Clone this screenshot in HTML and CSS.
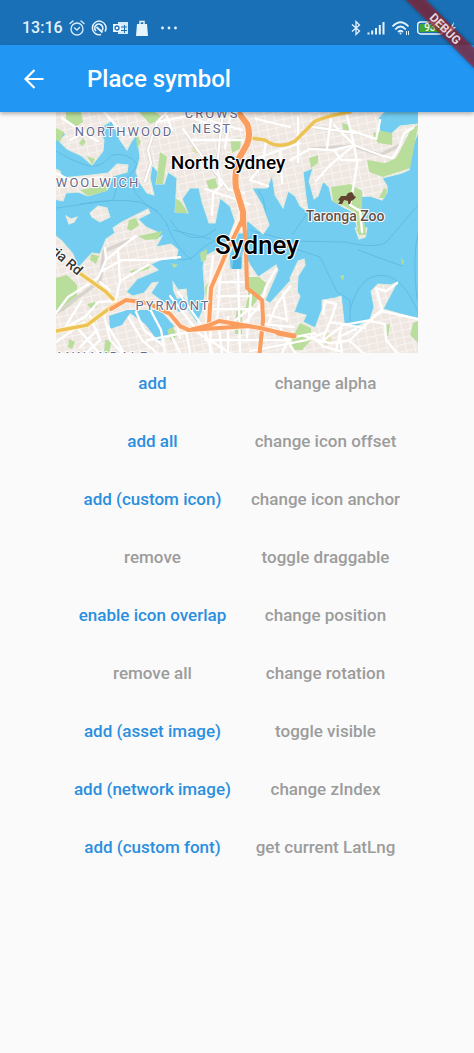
FILE: index.html
```html
<!DOCTYPE html>
<html lang="en">
<head>
    <meta charset="UTF-8">
    <meta name="viewport" content="width=device-width, initial-scale=1.0">
    <title>Place symbol</title>
    <link rel="stylesheet" href="styles.css">
</head>
<body>
    <div class="status-bar">
        <span class="time">13:16</span>
        <div class="status-left">
            <svg width="16" height="18" viewBox="0 0 16 18" fill="none" stroke="#d5eafa" stroke-width="1.4" stroke-linecap="round">
                <circle cx="8" cy="10" r="6"/>
                <path d="M1 4.5L4 2M15 4.5L12 2M5.500 9L8 11L10.500 8.500"/>
            </svg>
            <svg width="16" height="18" viewBox="0 0 16 18" fill="none" stroke="#e6f2fb" stroke-width="1.500">
                <path d="M10 15.500A6.800 6.800 0 1 1 14 12.500"/>
                <path d="M5 12A4 4 0 1 1 11 11.500M5.500 8L11.500 13.500" stroke-width="1.700"/>
            </svg>
            <svg width="16" height="18" viewBox="0 0 16 18">
                <path d="M5 3H15V15H5Z" fill="#d5eafa"/>
                <path d="M8 8H14M8 11.500H14M11.500 6V14" stroke="#1a70b6"/>
                <rect x="0" y="5" width="8" height="8" fill="#eef7fd"/>
                <circle cx="4" cy="9" r="2" fill="none" stroke="#1a70b6" stroke-width="1.300"/>
            </svg>
            <svg width="14" height="18" viewBox="0 0 14 18">
                <path d="M2 5H12L13 17H1Z" fill="#e6f4fd"/>
                <path d="M5 7V2.500H9V7" fill="none" stroke="#e6f4fd" stroke-width="1.500"/>
            </svg>
        </div>
        <svg class="dots" width="16" height="18" viewBox="0 0 16 18" fill="#e6f2fb">
            <circle cx="1.500" cy="9" r="1.400"/><circle cx="8" cy="9" r="1.400"/><circle cx="14.500" cy="9" r="1.400"/>
        </svg>
        <div class="status-right">
            <svg width="10" height="18" viewBox="0 0 10 18" fill="none" stroke="#e6f2fb" stroke-width="1.300">
                <path d="M1 5.500L8.500 12L5 15.500V2.500L8.500 6L1 12.500"/>
            </svg>
            <svg width="18" height="18" viewBox="0 0 18 18" stroke="#e6f2fb" stroke-width="2">
                <path d="M1.500 15.500V13.500M5.200 15.500V11.500M9 15.500V9M12.800 15.500V6M16.500 15.500V3"/>
            </svg>
            <svg width="20" height="18" viewBox="0 0 20 18" fill="none" stroke="#e6f2fb" stroke-width="1.800">
                <path d="M1.500 7.500Q9.500 -1 17.500 7.500M4.200 10.500Q9.500 4.500 14.800 10.500M7 13Q9.500 10.500 12 13"/>
                <circle cx="9.500" cy="14.500" r="1" fill="#e6f2fb" stroke="none"/>
                <path d="M15.500 12V16M17.500 12V16" stroke-width="1"/>
            </svg>
            <svg width="40" height="18" viewBox="0 0 40 18">
                <rect x="0.700" y="3" width="25" height="12" rx="3" fill="none" stroke="#f0f7fc" stroke-width="1.400"/>
                <rect x="2.500" y="5" width="21.500" height="8" rx="1" fill="#43a536"/>
                <path d="M27.500 7V11" stroke="#f0f7fc" stroke-width="2"/>
                <path d="M37 3L32 10H35L33 15L39 8H36Z" fill="#f0f7fc"/>
                <text x="13" y="12" class="battery-text">93</text>
            </svg>
        </div>
    </div>

    <header class="app-bar">
        <button class="back" aria-label="Back">
            <svg width="20" height="20" viewBox="0 0 20 20" fill="none" stroke="#fff" stroke-width="2.200">
                <path d="M10.500 1L1.500 10L10.500 19M1.500 10H19.500"/>
            </svg>
        </button>
        <h1>Place symbol</h1>
    </header>

    <svg class="debug-banner" width="74" height="74" viewBox="0 0 74 74">
        <g transform="translate(74 0) rotate(45)">
            <rect class="banner-shadow" x="-60" y="34" width="120" height="14"/>
            <rect x="-60" y="34" width="120" height="14" fill="#a51c28" fill-opacity="0.600"/>
            <text x="0" y="45" class="banner-text">DEBUG</text>
        </g>
    </svg>

    <main>
        <svg class="map" viewBox="56 112 362 241" role="img" aria-label="Map of Sydney">
            <defs>
                <!-- faint street grid over the land -->
                <pattern id="streets" width="9" height="7" patternUnits="userSpaceOnUse" patternTransform="rotate(-12)">
                    <rect width="9" height="7" fill="#efe7e1"/>
                    <path d="M0 .5H9M.5 0V7" stroke="#f8f4f1" stroke-width="1.200"/>
                </pattern>
            </defs>
            <rect x="56" y="112" width="362" height="241" fill="#73cdf0"/>

            <!-- ferry lines -->
            <g fill="none" stroke="#5fb9e2" stroke-width="0.900">
                <path d="M56 151Q70 160 85 165T112 155Q128 152 137 164Q130 180 118 183L113 200L56 208"/>
                <path d="M80 204Q115 198 140 202Q165 212 170 232Q180 252 192 260"/>
                <path d="M130 182Q140 205 158 211M170 220Q190 250 216 229M173 230L211 239"/>
                <path d="M250 230L290 241L345 242Q380 250 388 240L418 205"/>
                <path d="M265 240Q300 250 320 257L337 292L350 300V322"/>
                <path d="M358 250L402 266"/>
                <path d="M350 310Q358 280 375 276Q400 270 418 312M418 232Q412 260 417 300"/>
                <path d="M258 190Q270 205 262 230L245 240M302 180L306 215L292 235"/>
                <path d="M173 258Q190 265 202 248L222 236"/>
            </g>

            <!-- land -->
            <g fill="url(#streets)" stroke="#e2ecdf" stroke-width="1">
                <path d="M50 108H102L111 121L98 129L104 140L103 151L92 165L82 156L67 149L59 141L66 134L50 126Z"/>
                <path d="M100 108H388L378 118L380 132L391 134L400 126L418 124V132L411 150L409 170L402 173L382 178L387 186V192L382 200L370 196L358 197L361 212L366 235H359L353 212L343 207L332 200L329 187L323 181L318 196L314 199L309 181L313 168L303 172L305 190L308 212L300 206L295 196L288 191L283 208L275 195L272 175L267 188H252L262 205L269 225L263 234L247 220L245 233H239L230 206L220 198L215 223H209L202 202L199 188H190L182 199L188 213L175 212L177 178L168 172L164 184H156L158 172L152 165L150 178L154 195L147 193L140 183L136 172L140 158L137 134L131 142L127 150L120 140L112 121Z"/>
                <path d="M50 166L60 171L62 178L92 175L108 173L117 164L128 165L127 172L113 176L107 190L88 196L78 192L66 193L63 201L50 198Z"/>
                <path d="M90 213L98 206L107 208L110 217L100 222L92 217Z"/>
                <path d="M66 216L71 219L77 217L74 222L69 224Z"/>
                <path d="M50 231L62 241L73 254L78 268L92 253L100 254L106 239L115 233L113 228L122 222L148 209L150 213L138 219L146 227L157 232L149 236L155 240L162 236L156 247L171 244L178 250L176 259L167 257L151 264L158 270L137 279L126 292L133 296L144 293L152 283L158 282L151 293L166 304L174 304L173 282L178 290L186 289L188 304L181 300L197 323L202 312L205 293L203 267L205 256L217 250L229 254L230 269H242L243 252L250 265L258 277L276 265L278 270L265 300L270 303L282 290L290 281L300 296L294 312L306 315L303 322L315 328L322 309L322 300L335 298L341 296L344 323L356 327L370 319L374 307L371 291L378 284L391 285L397 282L383 309L418 319V360H50Z"/>
                <path d="M298 261L304 259L305 265L298 276L297 294H294L290 278Z"/>
                <path d="M355 228L367 228L365 237L359 239Z"/>
            </g>
            <path d="M109 316L127 310L160 310L174 326L169 336L158 341L145 324L130 313L122 325L110 329Z" fill="#73cdf0"/>
            <path d="M172 288L177 299L184 297L187 306L179 312L166 303Z" fill="#73cdf0"/>

            <!-- parks -->
            <g fill="#b9de9c">
                <path d="M66 112H81L83 122L75 127L66 122Z"/>
                <path d="M56 128L64 132L60 142L56 140ZM79 143L83 138L86 142L82 146ZM87 156L95 159L92 165Z"/>
                <path d="M139 112H155L164 118L150 124ZM160 152L167 157L163 184H156ZM136 133L141 142L137 149Z"/>
                <path d="M80 190L106 185L107 191L88 196ZM129 220L136 218L139 225L131 231L127 229Z"/>
                <path d="M230 139L241 138L240 149L232 153ZM206 181L215 178L218 188L209 189ZM175 198L181 202L188 213H175Z"/>
                <path d="M342 123L349 125V130H343ZM373 133L382 131L392 133V145L378 143L374 138Z"/>
                <path d="M367 160L385 163L396 158L404 143L411 129L418 125L410 168L383 177L369 172Z"/>
                <path d="M331 187L350 184L362 191V207L353 211L344 206L333 202Z"/>
                <path d="M354 210L362 208L366 235H359ZM309 158L318 155V163L311 168ZM384 188L387 190L385 198H379Z"/>
                <path d="M56 278L67 275L77 285L77 300L63 311L56 310ZM91 254L99 256L96 264L90 260ZM138 236L162 231L158 239L145 240Z"/>
                <path d="M248 277L259 277L266 283L262 293L252 307L244 313L248 297ZM237 309H242V334H235V320Z"/>
                <path d="M205 287L211 280L211 297L206 301ZM300 323L311 328V340L302 350H292V338Z"/>
                <path d="M413 323L418 321V343L410 335ZM385 325L390 324L388 336H385ZM105 340L112 340L109 353H104ZM167 330L173 327L177 336L171 341Z"/>
                <path d="M200 253L207 249L206 260L201 262ZM171 263L178 265L174 268ZM356 229L366 229L363 235H359ZM340 276L344 275L343 281ZM401 257L404 262L402 265Z"/>
                <path d="M130 271L150 266L149 269L132 274ZM69 339L75 342L72 349L68 347ZM87 304L95 302L97 307L90 308Z"/>
            </g>
            <path d="M322 338L328 332L332 340L326 346ZM193 146L199 148L197 154L192 151Z" fill="#e3dfb8"/>
            <path d="M234 257H241V269H232Z" fill="#4fb6e3"/>

            <!-- streets -->
            <g fill="none" stroke="#d9d3ce" stroke-width="3.500" stroke-linejoin="round">
                <path d="M167 112L157 122L148 150L151 163L145 181"/>
                <path d="M186 134L204 159L228 189M222 119L217 165M313 127L355 133M310 149L354 146L380 155L400 145M56 313L100 281L104 251L130 240"/>
            </g>
            <g fill="none" stroke="#fff" stroke-width="2.300" stroke-linejoin="round" stroke-linecap="round">
                <path d="M167 112L157 122L148 150L151 163L145 181M157 122L187 116L220 128M165 112L172 130"/>
                <path d="M104 112L120 130L130 134M62 118L90 137L98 141M70 140L86 131M56 173L72 181L102 177"/>
                <path d="M183 129L204 159L219 177L228 189L244 193M222 119L217 165L220 184M231 112L225 148M193 140H252M208 120L242 130"/>
                <path d="M222 184L213 194L212 215M205 189L232 198L249 204M249 161L258 171L250 180L268 186M249 161L300 143"/>
                <path d="M331 118L327 148M313 127L355 133M346 112L354 145L332 150L310 149L290 160M354 145L334 125M354 145L380 155L393 158L400 145L404 133L413 128"/>
                <path d="M354 145L330 165L316 181M334 150L341 160H361M354 145L357 163L354 183L350 205L360 211L362 232M350 130L376 139L380 120"/>
                <path d="M256 119L290 127M266 141L262 168M280 150L282 183M298 118V162"/>
                <path d="M56 313L68 297L98 278L106 260L120 248L136 236M102 271L122 260L151 260L180 257M106 260L105 248M118 251L120 281L116 299M120 281L148 265M100 282L110 290"/>
                <path d="M116 301L98 302L86 316L62 330M104 315L110 340L122 353M108 326L124 353M129 318L142 340L157 353M136 312L144 330L164 346M147 340L193 331"/>
                <path d="M81 301L64 329M74 324L99 353M90 316L100 340L86 353M56 342L84 322M97 330L80 347"/>
                <path d="M178 292L203 327L212 353M170 296L188 319L195 328M175 316L180 338M151 311L161 330L165 353M186 331L190 353M171 335L180 353M195 331L230 353"/>
                <path d="M213 256L209 290L211 321L210 353M224 256L220 280L217 322M211 282H246M217 296H250M212 309H264M238 270L240 353M251 294L247 337M205 340H290M218 321L222 353M228 317V353M251 307L232 323M261 304L240 328"/>
                <path d="M276 269L266 287L261 304M290 286L277 304L269 322M263 324L294 327M268 315L285 319M283 293L287 321M250 351L306 340L326 332M280 328L295 353M290 336L282 353M294 337L315 333"/>
                <path d="M325 301L336 304L331 319L323 338M325 301L323 314M304 336L330 343L350 340L361 329L382 309M311 336L324 347M321 342L343 325L370 320L382 311L418 319M331 322L365 328M341 328L336 350M349 340L363 353M371 321L385 324L386 340L397 353M356 329L340 336L342 353M382 310L376 288L386 291L397 283M326 347L340 351"/>
            </g>

            <!-- main roads -->
            <g fill="none" stroke-linejoin="round" stroke-linecap="round">
                <path d="M81 274L105 291L113 299M56 331L87 325L111 307L125 300" stroke="#fff3d0" stroke-width="5"/>
                <path d="M81 274L105 291L113 299M56 331L87 325L111 307L125 300M251 138L265 140Q279 150 295 141L315 121Q330 115 350 112" stroke="#edc354" stroke-width="3.400"/>
                <path d="M238 112L246 122Q251 134 247 144L238 160Q234 174 236 188L243 212V229M242 214L225 256L211 288L208 323" stroke="#fff1e3" stroke-width="8"/>
                <path d="M238 112L247 124Q251 134 247 144L238 160Q234 174 236 188L243 212V224" stroke="#fa9d5f" stroke-width="6"/>
                <path d="M243 218L227 251L211 288L209 323M244 219L246 254L247 288L262 300L263 320L259 358" stroke="#fa9d5f" stroke-width="4"/>
                <path d="M111 309L126 300L148 303L170 314L180 326L189 330L209 325L219 321L260 328L294 336M188 330L219 328L250 326" stroke="#fff1e3" stroke-width="5.500"/>
                <path d="M111 309L126 300L148 303L170 314L180 326L189 330L209 325L219 321L260 328L294 336M188 330L219 328L250 326" stroke="#fa9d5f" stroke-width="4"/>
                <path d="M278 333L294 336" stroke="#fa9d5f" stroke-width="5"/>
            </g>

            <!-- zoo marker -->
            <path d="M338 200L341 196L346 196L348 193L352 192L354 196L356 197L353 200L351 201L350 204H348V201L344 200L342 204H338L340 201Z" fill="#63412f"/>

            <!-- place labels -->
            <g class="area-label">
                <text x="124" y="136">NORTHWOOD</text>
                <text x="212" y="118">CROWS</text>
                <text x="212" y="133">NEST</text>
                <text x="98" y="187">WOOLWICH</text>
                <text x="173" y="310">PYRMONT</text>
                <text x="102" y="361">ANNANDALE</text>
            </g>
            <text class="road-label" transform="translate(44 247) rotate(41)">oria Rd</text>
            <text class="poi-label" x="345" y="221">Taronga Zoo</text>
            <text class="suburb-label" x="228" y="169">North Sydney</text>
            <text class="city-label" x="257" y="254">Sydney</text>
        </svg>

        <div class="actions">
            <div class="column">
                <button>add</button>
                <button>add all</button>
                <button>add (custom icon)</button>
                <button disabled>remove</button>
                <button>enable icon overlap</button>
                <button disabled>remove all</button>
                <button>add (asset image)</button>
                <button>add (network image)</button>
                <button>add (custom font)</button>
            </div>
            <div class="column">
                <button disabled>change alpha</button>
                <button disabled>change icon offset</button>
                <button disabled>change icon anchor</button>
                <button disabled>toggle draggable</button>
                <button disabled>change position</button>
                <button disabled>change rotation</button>
                <button disabled>toggle visible</button>
                <button disabled>change zIndex</button>
                <button disabled>get current LatLng</button>
            </div>
        </div>
    </main>
</body>
</html>
```
FILE: styles.css
```css
* {
    box-sizing: border-box;
}
body {
    margin: 0;
    position: relative;
    font-family: Roboto, "Liberation Sans", sans-serif;
    background: #fafafa;
    overflow-x: hidden;
}
svg {
    display: block;
    flex-shrink: 0;
}
.status-bar {
    display: flex;
    align-items: center;
    height: 45px;
    padding: 11px 17px 0 22px;
    background: #1a70b6;
}
.time {
    color: #e6f2fb;
    font-size: 16px;
    font-weight: 500;
    line-height: 20px;
}
.status-left {
    display: flex;
    gap: 6px;
    margin-left: 6px;
}
.dots {
    margin-left: 12px;
}
.status-right {
    display: flex;
    gap: 6px;
    margin-left: auto;
}
.battery-text {
    fill: #fff;
    font-size: 10px;
    font-weight: 500;
    text-anchor: middle;
}
.app-bar {
    position: relative;
    display: flex;
    align-items: center;
    height: 67px;
    padding: 0 24px;
    background: #2196f3;
    box-shadow: 0 2px 4px rgba(0, 0, 0, 0.3);
}
.back {
    padding: 0;
    border: none;
    background: none;
    cursor: pointer;
}
.app-bar h1 {
    margin: 0 0 0 43px;
    color: #fff;
    font-size: 24px;
    font-weight: 500;
    line-height: 32px;
}
.debug-banner {
    position: absolute;
    top: 0;
    right: 0;
    pointer-events: none;
}
.banner-shadow {
    fill: #000;
    fill-opacity: 0.35;
    filter: blur(2px);
}
.banner-text {
    fill: #e8d5da;
    font-size: 12px;
    font-weight: 700;
    text-anchor: middle;
}
.map {
    width: 76.4%;
    margin: 0 auto;
}
.map text {
    paint-order: stroke;
    stroke: #fff;
    stroke-width: 2px;
    stroke-linejoin: round;
    text-anchor: middle;
}
.area-label {
    fill: #666a8c;
    font-size: 13px;
    letter-spacing: 2px;
}
.map .road-label {
    fill: #333;
    font-size: 14px;
    font-weight: 500;
    text-anchor: start;
}
.poi-label {
    fill: #5e5148;
    font-size: 14px;
    font-weight: 500;
}
.suburb-label {
    fill: #000;
    font-size: 19px;
    font-weight: 500;
}
.city-label {
    fill: #000;
    font-size: 26px;
    font-weight: 500;
}
.actions {
    display: flex;
    justify-content: center;
}
.column {
    display: flex;
    flex-direction: column;
}
.column button {
    height: 58px;
    padding: 1px 10px 0;
    border: none;
    background: none;
    color: #2b8fdf;
    font-family: inherit;
    font-size: 17px;
    font-weight: 500;
    cursor: pointer;
}
.column button:disabled {
    color: #9c9c9c;
    cursor: default;
}
```
